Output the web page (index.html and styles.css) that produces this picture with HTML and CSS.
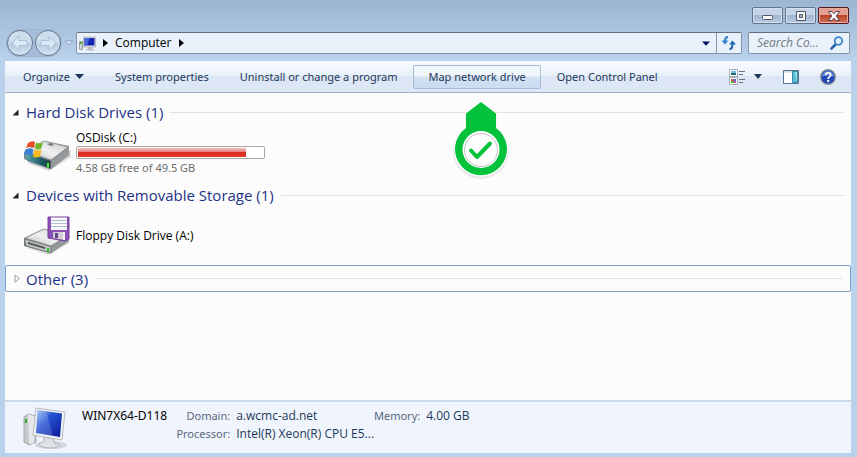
FILE: index.html
```html
<!DOCTYPE html>
<html lang="en">
<head>
<meta charset="utf-8">
<title>Computer</title>
<link rel="stylesheet" href="styles.css">
</head>
<body>
<div class="window">
  <header class="titlebar">
    <button class="caption" aria-label="Minimize"><svg width="14" height="12" viewBox="0 0 14 12"><rect x="1.500" y="5.500" width="10" height="4" rx="1" fill="#f6f6f4" stroke="#4f5768"/></svg></button>
    <button class="caption" aria-label="Maximize"><svg width="14" height="12" viewBox="0 0 14 12"><path d="M2.500 1.500h9v9h-9zM5.500 4.500v3h3v-3z" fill="#f6f6f4" fill-rule="evenodd" stroke="#4f5768"/></svg></button>
    <button class="caption close" aria-label="Close"><svg width="14" height="12" viewBox="0 0 14 12"><path d="M1.500 1.500h3.500l2 2.300 2-2.300h3.500L9.200 6l3.300 4.500H9L7 8.200l-2 2.300H1.500L4.800 6z" fill="#fff" stroke="#5b4450"/></svg></button>
  </header>

  <nav class="navbar">
    <div class="travel">
      <button class="round" aria-label="Back"><svg width="18" height="16" viewBox="0 0 18 16"><path d="M1 8l7-7v4.500h8v5H8V15z" fill="#dce8f3" stroke="#aac0d8"/></svg></button>
      <button class="round" aria-label="Forward"><svg width="18" height="16" viewBox="0 0 18 16"><path d="M17 8l-7-7v4.500H2v5h8V15z" fill="#dce8f3" stroke="#aac0d8"/></svg></button>
    </div>
    <button class="recent" aria-label="Recent pages"><svg width="10" height="6" viewBox="0 0 10 6"><path d="M1 .8h7.500L4.800 5z" fill="#dce8f5" stroke="#8da4c2"/></svg></button>
    <div class="address">
      <svg width="17" height="15" viewBox="0 0 17 15"><path d="M.5 5.500h3v8h-3z" fill="#cfd3d5" stroke="#9a9fa3"/><path d="M1 6h2v2H1z" fill="#43b72c"/><path d="M4.500 1h12v10h-12z" fill="#e5e7e8" stroke="#b4b9bd"/><path d="M5.500 2h10v7.500h-10z" fill="#1425b4"/><path d="M5.500 2h5l-2 7.500h-3z" fill="#4466dc"/><path d="M9 11h4v1.500l2 1v1H7v-1l2-1z" fill="#b9bec1"/></svg>
      <svg class="crumb-arrow" width="5" height="8" viewBox="0 0 5 8"><path d="M0 0l5 4-5 4z"/></svg>
      <a href="#computer" class="crumb">Computer</a>
      <svg class="crumb-arrow" width="5" height="8" viewBox="0 0 5 8"><path d="M0 0l5 4-5 4z"/></svg>
      <button class="history" aria-label="Previous locations"><svg width="8" height="5" viewBox="0 0 8 5"><path d="M0 .5h8L4 4.800z" fill="#00105f"/></svg></button>
      <button class="refresh" aria-label="Refresh"><svg width="16" height="14" viewBox="0 0 16 14"><path d="M7 1C4.800 1 4 2.500 4 5" fill="none" stroke="#2e7cc9" stroke-width="2"/><path d="M.5 4.500h7L4 8.500z" fill="#2e83d2"/><path d="M8.500 13c2.500 0 3-2 3-5" fill="none" stroke="#1f5ca8" stroke-width="2"/><path d="M8 8.500h7l-3.500-4z" fill="#2268b7"/></svg></button>
    </div>
    <label class="search">
      <input type="text" placeholder="Search Co..." aria-label="Search Computer">
      <svg width="14" height="14" viewBox="0 0 14 14"><path d="M6 8L1.500 12.500" stroke="#2b66a8" stroke-width="2.600" stroke-linecap="round"/><circle cx="8.500" cy="5" r="3.800" fill="#e5f3fc" stroke="#3a87cb" stroke-width="1.800"/></svg>
    </label>
  </nav>

  <main class="client">
    <div class="toolbar">
      <button class="tool">Organize <svg width="9" height="5" viewBox="0 0 9 5"><path d="M0 0h9L4.500 5z" fill="#1f3657"/></svg></button>
      <button class="tool">System properties</button>
      <button class="tool">Uninstall or change a program</button>
      <div class="marked">
        <button class="tool active">Map network drive</button>
        <svg class="marker" width="64" height="84" viewBox="0 0 64 84">
          <path d="M32 5L48 16v14a28 28 0 1 1-32 0V16z" fill="#9a9a9a" opacity=".2" transform="translate(0 1)"/>
          <path d="M32 4.500L47.500 16v14.500a27 27 0 1 1-31 0V16z" fill="#fff"/>
          <path d="M32 5L47 16.500V31a26 26 0 1 1-30 0V16.500z" fill="#04c23c"/>
          <circle cx="32" cy="52.500" r="18.500" fill="#fff"/>
          <circle cx="32" cy="53" r="16.500" fill="#fdfdfd" stroke="#aaa" stroke-opacity=".7"/>
          <path d="M22 53.500l6 6.500L41 46.500" fill="none" stroke="#04c23c" stroke-width="4" stroke-linecap="round" stroke-linejoin="round"/>
        </svg>
      </div>
      <button class="tool">Open Control Panel</button>
      <div class="view-tools">
        <button class="icon-tool views" aria-label="Change your view"><svg width="17" height="16" viewBox="0 0 17 16"><path d="M.5.500h8v7h-8zM.5 8.500h8v7h-8z" fill="#fff" stroke="#a5adb6"/><path d="M2 2h5v2H2z" fill="#78bdf2"/><path d="M2 4h5v2H2z" fill="#236b69"/><path d="M2 10h2v2H2z" fill="#e8532e"/><path d="M4 10h3v2H4z" fill="#5c67cc"/><path d="M2 12h3v2H2z" fill="#5fa52c"/><path d="M5 12h2v2H5z" fill="#d448b0"/><path d="M10 2.500h6M10 5.500h4M10 10.500h6M10 13.500h4" stroke="#68717b"/></svg><svg width="8" height="5" viewBox="0 0 8 5"><path d="M0 0h8L4 5z" fill="#1f3657"/></svg></button>
        <button class="icon-tool" aria-label="Show the preview pane"><svg width="16" height="14" viewBox="0 0 16 14"><path d="M.5.500h15v13H.5z" fill="#fff" stroke="#53748f"/><path d="M1 1h14v1.500H1z" fill="#c9d9e5"/><path d="M9.500 1.500h5v11h-5z" fill="#58bcd4" stroke="#358bad"/><path d="M12 2h2v10z" fill="#a9e5ee"/></svg></button>
        <button class="icon-tool" aria-label="Get help"><svg width="16" height="16" viewBox="0 0 16 16"><circle cx="8" cy="8" r="7.300" fill="#2148b4" stroke="#878f9b" stroke-width="1.400"/><path d="M2 8a6 6 0 0 1 12 0c-3-2-9-2-12 0z" fill="#6286dd"/><path d="M5.700 6.200c0-3.200 5-3 5-.3 0 1.700-2.500 1.800-2.500 4" fill="none" stroke="#fff" stroke-width="1.900"/><path d="M7.200 11h2v2h-2z" fill="#fff"/></svg></button>
      </div>
    </div>

    <div class="listing">
      <section class="group">
        <h2><svg width="7" height="7" viewBox="0 0 7 7"><path d="M6.500.500v6h-6z" fill="#222"/></svg>Hard Disk Drives (1)</h2>
        <div class="item">
          <svg class="drive" width="48" height="44" viewBox="0 0 48 44">
            <defs>
              <linearGradient id="top" x1="0" y1="1" x2="1" y2="0"><stop offset="0" stop-color="#b9bbbc"/><stop offset=".5" stop-color="#f1f1f1"/><stop offset="1" stop-color="#c3c5c6"/></linearGradient>
              <linearGradient id="teal" x1="0" x2="1"><stop offset="0" stop-color="#5fa9b3"/><stop offset=".7" stop-color="#17525e"/><stop offset="1" stop-color="#333c40"/></linearGradient>
            </defs>
            <path d="M4 34l22 8 22-14v-7z" fill="#888" opacity=".3"/>
            <path d="M1 23L22 12l24 5v9L28 40 1 30z" fill="#85898b"/>
            <path d="M2 22l19-10 24 6-17 13z" fill="url(#top)" stroke="#9b9fa1"/>
            <path d="M1.500 23L28 31.500V40L5 32q-3-2-3.500-9z" fill="url(#teal)" stroke="#71878c"/>
            <path d="M28.500 32L46 19v7L28.500 39.500z" fill="#94999b"/><path d="M25 34v4.500" stroke="#49ed35" stroke-width="2"/><path d="M24 15l4-1 3 2-3 1z" fill="#777"/>
            <path d="M5 14q4-3 7-1l-1 6q-4-2-8 0z" fill="#e64e25"/><path d="M13 13.500q4 2 7 0l-2 6.500q-4 1-6-.5z" fill="#72b52b"/><path d="M2.500 20.500q4-2 8 0L9 27q-4-3-8-1z" fill="#3980d8"/><path d="M11.500 20.500q3 2 7 .5L17 27.500q-4 2-7 0z" fill="#f6b91c"/>
          </svg>
          <div class="info">
            <span class="name">OSDisk (C:)</span>
            <div class="meter" role="img" aria-label="4.58 GB free of 49.5 GB"><div class="used"></div></div>
            <span class="space">4.58 GB free of 49.5 GB</span>
          </div>
        </div>
      </section>
      <section class="group">
        <h2><svg width="7" height="7" viewBox="0 0 7 7"><path d="M6.500.500v6h-6z" fill="#222"/></svg>Devices with Removable Storage (1)</h2>
        <div class="item">
          <svg class="drive" width="48" height="44" viewBox="0 0 48 44">
            <path d="M4 36l22 7 20-12v-7z" fill="#888" opacity=".3"/>
            <path d="M1 26L20 17l26 5v7L28 41 1 34z" fill="#777b7d"/><path d="M2 26l19-9 24 6-17 11z" fill="url(#top)" stroke="#9b9fa1"/>
            <path d="M1.500 27L28 34.500V41L3 34z" fill="#bfc2c3" stroke="#74787a"/><path d="M5 30l17 5v2L5 32z" fill="#555"/><path d="M28.500 35L46 23v6L28.500 40.500z" fill="#94999b"/><path d="M25 36v4" stroke="#2ac322" stroke-width="2"/>
            <path d="M25 5h21v22l-4 2-17-3z" fill="#8b51b4" stroke="#7641a0"/><path d="M28 5.500h16V18H28z" fill="#f7f8fa"/><path d="M28 8.500h16M28 11.500h16M28 14.500h16" stroke="#b2bdd0"/><path d="M30 20h12v8l-12-2z" fill="#d0cfd8"/><path d="M32 21h3v5h-3z" fill="#69448a"/><path d="M40 20h2v8h-2z" fill="#f0eff2"/>
          </svg>
          <div class="info"><span class="name">Floppy Disk Drive (A:)</span></div>
        </div>
      </section>
      <section class="group collapsed">
        <h2><svg width="7" height="9" viewBox="0 0 7 9"><path d="M1 .8v7.400l4.300-3.700z" fill="#fff" stroke="#9a9a9a"/></svg>Other (3)</h2>
      </section>
    </div>

    <footer class="details">
      <svg width="44" height="44" viewBox="0 0 44 44">
        <defs><linearGradient id="screen" x1="0" y1="0" x2="1" y2="1"><stop offset="0" stop-color="#9fc0f5"/><stop offset=".4" stop-color="#2453d5"/><stop offset="1" stop-color="#0b1593"/></linearGradient></defs>
        <ellipse cx="28" cy="39" rx="16" ry="4" fill="#777" opacity=".25"/>
        <path d="M1 11l4-3 8 2v26l-7 3-5-3z" fill="#c7cacc" stroke="#a2a6a9"/><path d="M5 8l6 2v27l-5 1z" fill="#e6e8e9"/><path d="M2 13h2v4H2z" fill="#29ac2b"/>
        <path d="M21 31l10 2v4l5 1q0 4-8 4-11 0-12-4l5-3z" fill="#dfe2e4" stroke="#b2b6ba"/>
        <path d="M13 2l29 4-3 28-29-5z" fill="#eff1f3" stroke="#b9bdc1"/><path d="M14.500 4L39 7.500 37 31l-24-4z" fill="url(#screen)"/><path d="M14.500 4l9 1.300 6 24.500L13 27z" fill="#fff" opacity=".16"/>
      </svg>
      <strong class="host">WIN7X64-D118</strong>
      <dl class="facts">
        <dt>Domain:</dt><dd>a.wcmc-ad.net</dd>
        <dt>Memory:</dt><dd>4.00 GB</dd>
        <dt>Processor:</dt><dd>Intel(R) Xeon(R) CPU E5...</dd>
      </dl>
    </footer>
  </main>
</div>
</body>
</html>
```
FILE: styles.css
```css
* { box-sizing: border-box; }

body {
  margin: 0;
  font: 12px/16px "Open Sans", sans-serif;
  color: #000;
}

button {
  padding: 0;
  border: 0;
  background: none;
  font: inherit;
  color: inherit;
}

svg { display: block; flex: none; }

.window {
  display: flex;
  flex-direction: column;
  min-height: 100vh;
  padding: 0 6px 4px 5px;
  background: linear-gradient(#9bb5d2, #b9d1ea 60px);
}

.titlebar {
  display: flex;
  justify-content: flex-end;
  gap: 2px;
  height: 32px;
  padding: 7px 2px 0 0;
}

.caption {
  display: flex;
  align-items: center;
  justify-content: center;
  width: 31px;
  height: 17px;
  border: 1px solid #64748b;
  border-radius: 2px;
  background: linear-gradient(#c4d3e6 45%, #9fb5d0 50%, #b9cde4);
  box-shadow: inset 0 0 0 1px #d4e0ee;
}

.close {
  border-color: #5a1520;
  background: linear-gradient(#e3a092 45%, #bd4027 50%, #d0765a);
  box-shadow: inset 0 0 0 1px #e5aca0;
}

.navbar {
  display: flex;
  align-items: center;
  height: 29px;
  padding: 0 1px 7px 2px;
}

.travel {
  display: flex;
  gap: 2px;
  border-radius: 13px;
  background: #a5bdd8;
  box-shadow: 0 0 0 1px #9db5d0;
}

.round {
  display: flex;
  align-items: center;
  justify-content: center;
  width: 26px;
  height: 26px;
  border: 1px solid #66778c;
  border-radius: 50%;
  background: linear-gradient(#cedded 45%, #b5cbe1 55%, #d4e5f4);
  box-shadow: inset 0 0 0 1px #d7e5f2;
}

.recent { width: 15px; padding-left: 3px; }

.address, .search {
  display: flex;
  align-items: center;
  height: 22px;
  border: 1px solid #8194ac;
  border-top-color: #5e6d80;
  border-radius: 2px;
  background: #e9f1fa;
}

.address {
  flex: 1;
  padding-left: 2px;
}

.crumb-arrow { margin: 0 7px; }

.crumb { color: #000; text-decoration: none; }

.history {
  display: grid;
  place-items: center;
  width: 20px;
  height: 20px;
  margin-left: auto;
}

.refresh {
  display: grid;
  place-items: center;
  width: 25px;
  height: 20px;
  border-left: 1px solid #8194ac;
}

.search {
  width: 102px;
  margin-left: 6px;
  padding: 0 5px 0 8px;
}

.search input {
  flex: 1;
  min-width: 0;
  padding: 0;
  border: 0;
  outline: 0;
  background: none;
  font: inherit;
  font-style: italic;
}

.search input::placeholder { color: #737a82; }

.client {
  display: flex;
  flex: 1;
  flex-direction: column;
  background: #fcfcfc;
}

.toolbar {
  display: flex;
  align-items: center;
  gap: 1px;
  height: 32px;
  padding-left: 3px;
  border-bottom: 1px solid #a0afc3;
  background: linear-gradient(#fafcff, #e6f0fa 50%, #dce6f4 50%, #dde7f5);
  color: #1e395b;
}

.tool {
  display: flex;
  align-items: center;
  gap: 5px;
  height: 24px;
  padding: 0 14px;
  border: 1px solid transparent;
  border-radius: 2px;
  font: 11px/16px "Noto Sans", sans-serif;
  white-space: nowrap;
}

.active {
  border-color: #a9bdd8;
  background: linear-gradient(#f1f6fd 45%, #d3e1f3 50%, #cbdcf1);
}

.marked { position: relative; }

.marker {
  position: absolute;
  top: 32px;
  left: 50%;
  margin-left: -28px;
}

.view-tools {
  display: flex;
  align-items: center;
  gap: 21px;
  margin-left: auto;
  padding-right: 15px;
}

.views {
  display: flex;
  align-items: center;
  gap: 8px;
}

.listing {
  flex: 1;
  padding-top: 6px;
}

.group h2 {
  display: flex;
  align-items: center;
  height: 26px;
  margin: 0;
  padding: 0 7px;
  font-size: 15px;
  font-weight: 400;
  color: #1e3287;
}

.group h2 svg { width: 7px; margin-right: 7px; }

.group h2::after {
  content: "";
  flex: 1;
  height: 1px;
  margin-left: 7px;
  background: #e2e2e2;
}

.collapsed {
  border: 1px solid #7da2ce;
  border-radius: 2px;
}

.collapsed h2 { height: 25px; padding: 0 8px; }

.collapsed h2 svg { margin-right: 5px; }

.item {
  display: flex;
  align-items: flex-start;
  height: 57px;
  padding: 4px 0 0 18px;
}

.info {
  display: flex;
  flex-direction: column;
  justify-content: center;
  height: 46px;
  margin-left: 5px;
}

.name, .space { line-height: 17px; }

.space {
  font-family: "Noto Sans", sans-serif;
  font-size: 11px;
  color: #6d6d6d;
}

.meter {
  flex: none;
  width: 189px;
  height: 13px;
  padding: 1px;
  border: 1px solid #a9a9a9;
  border-radius: 2px;
  background: #fff;
}

.used {
  width: 91%;
  height: 100%;
  background: linear-gradient(#f3c0c0, #e57f7f 45%, #da2c22 50%, #e03a26);
}

.details {
  display: flex;
  padding: 4px 18px 3px;
  border-top: 2px solid #c9d9ea;
  background: #f0f4fc;
}

.host {
  margin-left: 15px;
  padding-top: 2px;
  font-family: "Noto Sans", sans-serif;
  font-weight: 400;
}

.facts {
  display: grid;
  grid-template-columns: 63px 143px 47px 1fr;
  align-content: start;
  row-gap: 2px;
  flex: 1;
  margin: 0;
  padding-top: 2px;
  white-space: nowrap;
}

.facts dt {
  font-family: "Noto Sans", sans-serif;
  font-size: 11px;
  text-align: right;
  color: #5a6780;
}

.facts dd { margin: 0 0 0 6px; color: #1e395b; }
```
